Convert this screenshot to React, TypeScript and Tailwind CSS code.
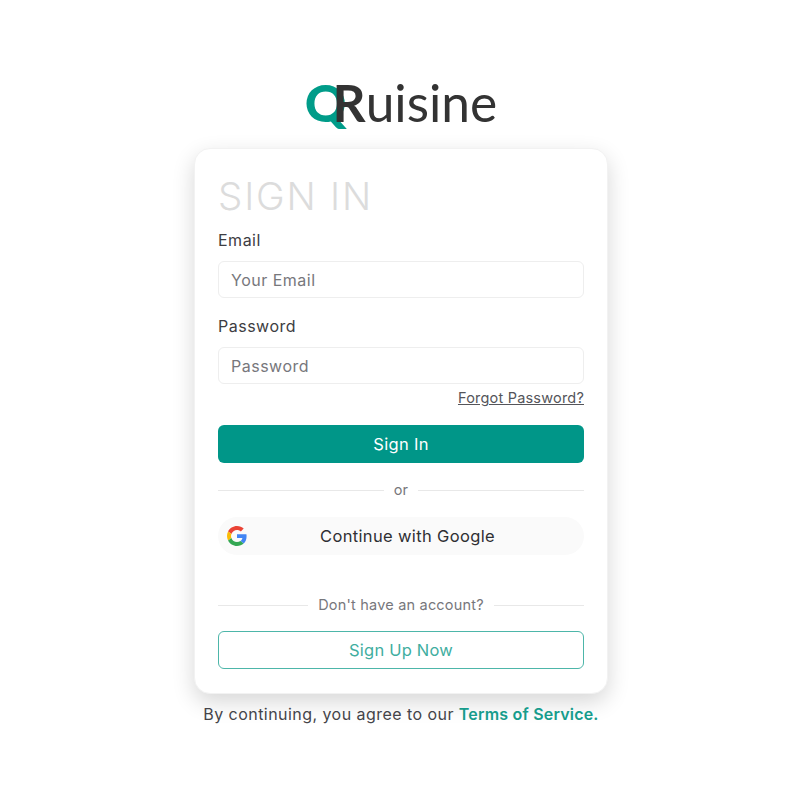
import React from 'react';

const font = "font-['Inter','Liberation_Sans',sans-serif]";

const GoogleIcon: React.FC = () => (
  <svg width="20" height="20" viewBox="0 0 48 48">
    <path fill="#EA4335" d="M24 9.5c3.5 0 6.7 1.2 9.2 3.6l6.9-6.9C35.9 2.4 30.5 0 24 0 14.6 0 6.5 5.4 2.6 13.2l8 6.2C12.5 13.6 17.8 9.5 24 9.5z" />
    <path fill="#4285F4" d="M47 24.5c0-1.6-.1-3.1-.4-4.5H24v9h12.9c-.6 3-2.2 5.5-4.7 7.2l7.7 6C44.4 37.9 47 31.8 47 24.5z" />
    <path fill="#FBBC05" d="M10.5 28.6c-.5-1.4-.8-3-.8-4.6s.3-3.2.8-4.6l-8-6.2C.9 16.5 0 20.1 0 24s.9 7.5 2.6 10.8l7.9-6.2z" />
    <path fill="#34A853" d="M24 48c6.5 0 11.9-2.1 15.9-5.8l-7.7-6c-2.2 1.5-4.9 2.3-8.2 2.3-6.2 0-11.5-4.1-13.4-9.9l-8 6.2C6.5 42.6 14.6 48 24 48z" />
  </svg>
);

const Divider: React.FC<{ label: string }> = ({ label }) => (
  <div className="flex items-center gap-2.5">
    <div className="h-px flex-1 bg-[#e8e8e8]" />
    <span className="text-[14.5px] leading-5 tracking-[0.2px] text-[#77777c]">{label}</span>
    <div className="h-px flex-1 bg-[#e8e8e8]" />
  </div>
);

const Field: React.FC<{ label: string; placeholder: string }> = ({ label, placeholder }) => (
  <div>
    <label className="block text-[16px] leading-5 tracking-[0.5px] text-[#3d3d42]">{label}</label>
    <div className="mt-[11px] flex h-[37px] items-center rounded-md border border-[#eeeeee] px-3 text-[16px] tracking-[0.5px] text-[#77777c]">
      {placeholder}
    </div>
  </div>
);

export default function App() {
  return (
    <div className={`flex h-[805px] flex-col items-center bg-white pr-[3px] pt-[73px] ${font}`}>
      <div className="flex h-[60px] items-center font-['Lato',sans-serif] text-[51.5px] leading-none text-[#333333]">
        <span className="font-black text-[#009c89]">Q</span>
        <span className="-ml-[14px] font-bold">R</span>
        <span>uisine</span>
      </div>

      <div className="mt-[15px] h-[546px] w-[414px] rounded-2xl border border-[#f2f2f2] bg-white px-[23px] pt-[24px] shadow-[0_8px_22px_rgba(0,0,0,0.16)]">
        <h1 className="text-[38.5px] font-light leading-[46px] tracking-[1.8px] text-[#dcdcdc]">SIGN IN</h1>
        <div className="mt-[11px]">
          <Field label="Email" placeholder="Your Email" />
        </div>
        <div className="mt-[18px]">
          <Field label="Password" placeholder="Password" />
        </div>
        <div className="mt-px text-right">
          <a className="text-[14.5px] leading-5 tracking-[0.2px] text-[#55555a] underline">Forgot Password?</a>
        </div>
        <button className="mt-[16px] block h-[38px] w-full rounded-md bg-[#009688] text-[16.5px] tracking-[0.3px] text-white">
          Sign In
        </button>
        <div className="mt-[17px]">
          <Divider label="or" />
        </div>
        <div className="mt-[17px] flex h-[38px] items-center rounded-full bg-[#fafafa] pl-[9px] pr-[24px]">
          <GoogleIcon />
          <span className="flex-1 pl-2 text-center text-[16.5px] tracking-[0.35px] text-[#2f2f33]">Continue with Google</span>
        </div>
        <div className="mt-[40px]">
          <Divider label="Don't have an account?" />
        </div>
        <button className="mt-[16px] block h-[38px] w-full rounded-md border-[1.5px] border-[#4db6a9] bg-white text-[16.5px] tracking-[0.2px] text-[#3fae9f]">
          Sign Up Now
        </button>
      </div>

      <p className="mt-[10px] text-[16px] leading-5 tracking-[0.45px] text-[#444449]">
        By continuing, you agree to our <span className="font-semibold tracking-[0.2px] text-[#169c8c]">Terms of Service.</span>
      </p>
    </div>
  );
}
